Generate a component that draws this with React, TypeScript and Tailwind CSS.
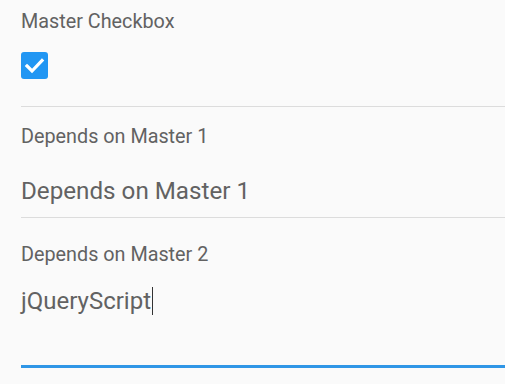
import React from "react";

export default function App() {
  return (
    <div
      className="min-h-[384px] w-[505px] bg-[#fafafa] pl-[21px] pt-[12px] text-[#626262]"
      style={{ fontFamily: "Roboto, 'Noto Sans', sans-serif" }}
    >
      <div className="text-[19.8px] leading-[20px]">Master Checkbox</div>
      <div className="mt-[20px] flex h-[27px] w-[27px] items-center justify-center rounded-[3px] bg-[#2196f3]">
        <svg width="27" height="27" viewBox="0 0 27 27">
          <polyline
            points="6,14 11,19 21,8.5"
            fill="none"
            stroke="#fff"
            strokeWidth="3.2"
            strokeLinecap="square"
          />
        </svg>
      </div>
      <div className="mt-[27px] h-px bg-[#dcdcdc]" />
      <div className="mt-[20px] text-[19.8px] leading-[20px]">Depends on Master 1</div>
      <div className="mt-[32px] border-b border-[#dcdcdc] pb-[14px] text-[24.2px] leading-[24px]">
        Depends on Master 1
      </div>
      <div className="mt-[27px] text-[19.8px] leading-[20px]">Depends on Master 2</div>
      <div className="mt-[24px] flex h-[24px] items-center text-[24px] leading-[24px]">
        <span>jQueryScript</span>
        <span className="ml-[1px] inline-block h-[28px] w-px bg-[#333]" />
      </div>
      <div className="mt-[52px] h-[3px] bg-[#2f96e6]" />
    </div>
  );
}
